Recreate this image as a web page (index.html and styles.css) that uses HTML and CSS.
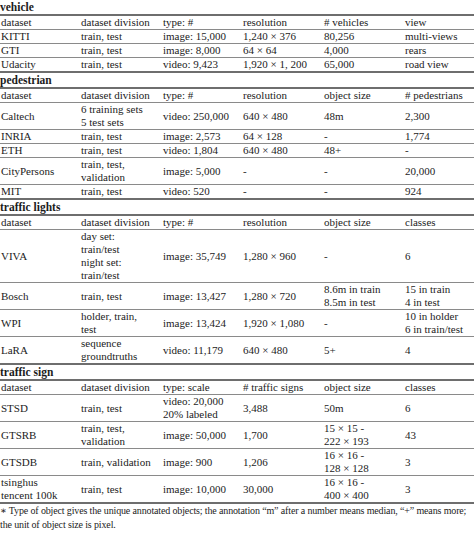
FILE: index.html
```html
<!DOCTYPE html>
<html>
<head>
<meta charset="utf-8">
<link rel="stylesheet" href="styles.css">
</head>
<body>
<div class="page">
  <div class="title">vehicle</div>
  <table class="t">
    <colgroup><col class="c1"><col class="c2"><col class="c3"><col class="c4"><col class="c5"><col class="c6"></colgroup>
    <tr><td>dataset</td><td>dataset division</td><td>type: #</td><td>resolution</td><td># vehicles</td><td>view</td></tr>
    <tr><td>KITTI</td><td>train, test</td><td>image: 15,000</td><td>1,240 × 376</td><td>80,256</td><td>multi-views</td></tr>
    <tr><td>GTI</td><td>train, test</td><td>image: 8,000</td><td>64 × 64</td><td>4,000</td><td>rears</td></tr>
    <tr><td>Udacity</td><td>train, test</td><td>video: 9,423</td><td>1,920 × 1, 200</td><td>65,000</td><td>road view</td></tr>
  </table>

  <div class="title">pedestrian</div>
  <table class="t">
    <colgroup><col class="c1"><col class="c2"><col class="c3"><col class="c4"><col class="c5"><col class="c6"></colgroup>
    <tr><td>dataset</td><td>dataset division</td><td>type: #</td><td>resolution</td><td>object size</td><td># pedestrians</td></tr>
    <tr><td>Caltech</td><td>6 training sets<br>5 test sets</td><td>video: 250,000</td><td>640 × 480</td><td>48m</td><td>2,300</td></tr>
    <tr><td>INRIA</td><td>train, test</td><td>image: 2,573</td><td>64 × 128</td><td>-</td><td>1,774</td></tr>
    <tr><td>ETH</td><td>train, test</td><td>video: 1,804</td><td>640 × 480</td><td>48+</td><td>-</td></tr>
    <tr><td>CityPersons</td><td>train, test,<br>validation</td><td>image: 5,000</td><td>-</td><td>-</td><td>20,000</td></tr>
    <tr><td>MIT</td><td>train, test</td><td>video: 520</td><td>-</td><td>-</td><td>924</td></tr>
  </table>

  <div class="title">traffic lights</div>
  <table class="t">
    <colgroup><col class="c1"><col class="c2"><col class="c3"><col class="c4"><col class="c5"><col class="c6"></colgroup>
    <tr><td>dataset</td><td>dataset division</td><td>type: #</td><td>resolution</td><td>object size</td><td>classes</td></tr>
    <tr><td>VIVA</td><td>day set:<br>train/test<br>night set:<br>train/test</td><td>image: 35,749</td><td>1,280 × 960</td><td>-</td><td>6</td></tr>
    <tr><td>Bosch</td><td>train, test</td><td>image: 13,427</td><td>1,280 × 720</td><td>8.6m in train<br>8.5m in test</td><td>15 in train<br>4 in test</td></tr>
    <tr><td>WPI</td><td>holder, train,<br>test</td><td>image: 13,424</td><td>1,920 × 1,080</td><td>-</td><td>10 in holder<br>6 in train/test</td></tr>
    <tr><td>LaRA</td><td>sequence<br>groundtruths</td><td>video: 11,179</td><td>640 × 480</td><td>5+</td><td>4</td></tr>
  </table>

  <div class="title">traffic sign</div>
  <table class="t">
    <colgroup><col class="c1"><col class="c2"><col class="c3"><col class="c4"><col class="c5"><col class="c6"></colgroup>
    <tr><td>dataset</td><td>dataset division</td><td>type: scale</td><td># traffic signs</td><td>object size</td><td>classes</td></tr>
    <tr><td>STSD</td><td>train, test</td><td>video: 20,000<br>20% labeled</td><td>3,488</td><td>50m</td><td>6</td></tr>
    <tr><td>GTSRB</td><td>train, test,<br>validation</td><td>image: 50,000</td><td>1,700</td><td>15 × 15 -<br>222 × 193</td><td>43</td></tr>
    <tr><td>GTSDB</td><td>train, validation</td><td>image: 900</td><td>1,206</td><td>16 × 16 -<br>128 × 128</td><td>3</td></tr>
    <tr><td>tsinghus<br>tencent 100k</td><td>train, test</td><td>image: 10,000</td><td>30,000</td><td>16 × 16 -<br>400 × 400</td><td>3</td></tr>
  </table>

  <p class="note">∗ Type of object gives the unique annotated objects; the annotation “m” after a number means median, “+” means more;<br>the unit of object size is pixel.</p>
</div>
</body>
</html>
```

FILE: styles.css
```css
html, body {
  margin: 0;
  padding: 0;
  background: #ffffff;
}

.page {
  width: 474px;
  font-family: "Liberation Serif", "DejaVu Serif", serif;
  font-size: 11px;
  color: #1c1c1c;
}

.title {
  font-weight: bold;
  height: 14px;
  line-height: 14px;
  font-size: 11.5px;
  padding-left: 0;
}

.t {
  width: 474px;
  table-layout: fixed;
  border-collapse: collapse;
  border-top: 2px solid #6e6e6e;
  border-bottom: 2px solid #6e6e6e;
}

.c1 { width: 80px; }
.c2 { width: 82px; }
.c3 { width: 80px; }
.c4 { width: 81px; }
.c5 { width: 81px; }
.c6 { width: 70px; }

.t td {
  padding: 0 0 0 1px;
  line-height: 13px;
  vertical-align: middle;
  white-space: nowrap;
}

.t tr + tr td {
  border-top: 1px solid #8a8a8a;
}

.note {
  margin: 0;
  font-size: 10px;
  letter-spacing: -0.14px;
  line-height: 14px;
  white-space: nowrap;
}
```
